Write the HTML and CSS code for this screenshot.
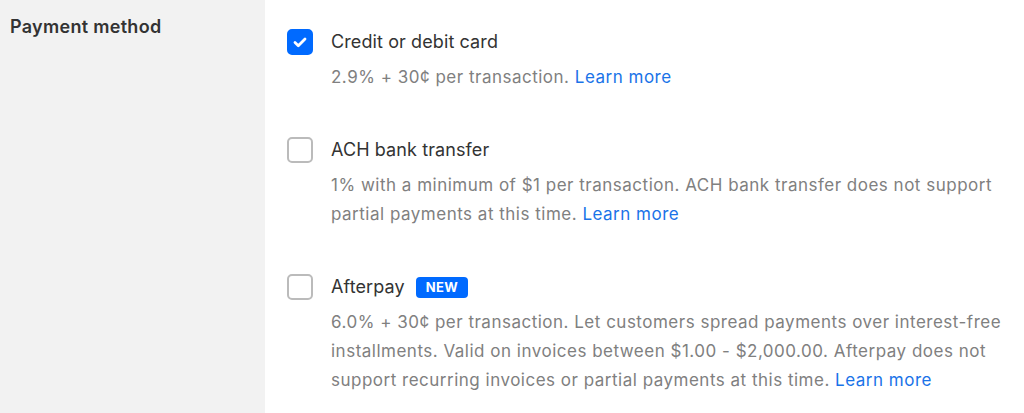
FILE: index.html
```html
<!DOCTYPE html>
<html lang="en">
<head>
<meta charset="utf-8">
<link rel="stylesheet" href="styles.css">
</head>
<body>
<div class="page">
  <aside class="side">
    <h2 class="side-title">Payment method</h2>
  </aside>
  <main class="options">
    <div class="option">
      <span class="box checked">
        <svg viewBox="0 0 26 26" width="26" height="26"><path d="M8 13.5l3.3 3.2L18 10" fill="none" stroke="#fff" stroke-width="2.8" stroke-linecap="round" stroke-linejoin="round"/></svg>
      </span>
      <div class="body">
        <div class="title">Credit or debit card</div>
        <p class="desc">2.9% + 30¢ per transaction. <a class="link">Learn more</a></p>
      </div>
    </div>
    <div class="option">
      <span class="box"></span>
      <div class="body">
        <div class="title">ACH bank transfer</div>
        <p class="desc">1% with a minimum of $1 per transaction. ACH bank transfer does not support partial payments at this time. <a class="link">Learn more</a></p>
      </div>
    </div>
    <div class="option">
      <span class="box"></span>
      <div class="body">
        <div class="title">Afterpay <span class="badge">NEW</span></div>
        <p class="desc">6.0% + 30¢ per transaction. Let customers spread payments over interest-free installments. Valid on invoices between $1.00 - $2,000.00. Afterpay does not support recurring invoices or partial payments at this time. <a class="link">Learn more</a></p>
      </div>
    </div>
  </main>
</div>
</body>
</html>
```
FILE: styles.css
```css
html, body {
  margin: 0;
  padding: 0;
  background: #ffffff;
}
body {
  font-family: Inter, "Noto Sans", sans-serif;
  color: #333333;
}
.page {
  display: flex;
  min-height: 413px;
}
.side {
  width: 265px;
  flex: none;
  background: #f2f2f2;
  padding: 16px 10px 0;
  box-sizing: border-box;
}
.side-title {
  margin: 0;
  font-size: 18px;
  font-weight: 600;
  line-height: 22px;
  letter-spacing: 0.3px;
  color: #333333;
}
.options {
  flex: 1;
  padding: 29px 14px 0 22px;
  display: flex;
  flex-direction: column;
  gap: 45px;
}
.option {
  display: flex;
  gap: 18px;
  align-items: flex-start;
}
.box {
  width: 26px;
  height: 26px;
  flex: none;
  box-sizing: border-box;
  border: 2px solid #bbbbbb;
  border-radius: 5px;
  background: #fff;
  display: flex;
}
.box svg {
  margin: -2px;
}
.box.checked {
  background: #006aff;
  border-color: #006aff;
}
.body {
  flex: 1;
}
.title {
  font-size: 18px;
  line-height: 26px;
  letter-spacing: 0.1px;
  color: #333333;
  display: flex;
  align-items: center;
  gap: 11px;
}
.badge {
  display: inline-block;
  background: #006aff;
  color: #fff;
  font-size: 13px;
  font-weight: 700;
  line-height: 21px;
  padding: 0 10px;
  border-radius: 4px;
  letter-spacing: 0.4px;
}
.desc {
  margin: 8px 0 0;
  font-size: 17px;
  line-height: 29px;
  letter-spacing: 0.5px;
  color: #808080;
}
.link {
  color: #1a73e8;
  cursor: pointer;
}
```
